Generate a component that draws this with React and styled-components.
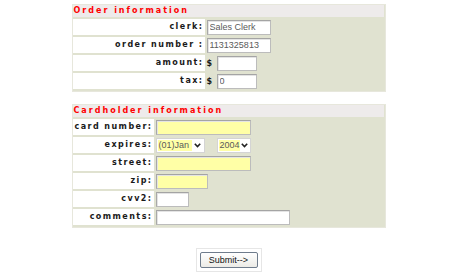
import React from "react";
import styled, { createGlobalStyle } from "styled-components";

const GlobalStyle = createGlobalStyle`
  body {
    margin: 0;
    background: #ffffff;
    font-family: "DejaVu Sans", Verdana, sans-serif;
  }
`;

const Page = styled.div`
  display: flex;
  flex-direction: column;
  align-items: center;
  padding-top: 4px;
`;

const Panel = styled.div`
  width: 314px;
  box-sizing: border-box;
  margin-top: ${(p) => p.$top || 0}px;
  border: 1px solid #e7e7dc;
  background: #e0e2d0;
  padding: 0 1px 2px 0;
  display: grid;
  grid-template-columns: ${(p) => p.$label}px 1fr;
  grid-template-rows: 12px;
  grid-auto-rows: 16px;
  gap: 2px;
`;

const Heading = styled.div`
  grid-column: 1 / -1;
  background: #eeebeb;
  color: #ff0000;
  font-size: 8px;
  font-weight: bold;
  letter-spacing: 2px;
  line-height: 12px;
  padding-left: 1px;
`;

const Label = styled.div`
  background: #ffffff;
  color: #1a1a1a;
  font-size: 8px;
  font-weight: bold;
  letter-spacing: 1.45px;
  line-height: 16px;
  text-align: right;
  padding-right: 1px;
  white-space: nowrap;
`;

const Field = styled.div`
  display: flex;
  align-items: center;
`;

const Dollar = styled.span`
  font-size: 8px;
  font-weight: bold;
  color: #1a1a1a;
  width: 6px;
  margin-right: 4px;
`;

const TextBox = styled.input`
  width: ${(p) => p.$w}px;
  height: 15px;
  box-sizing: border-box;
  padding: 0 2px;
  margin: 0;
  border: 1px solid #bcbcbc;
  border-top-color: #a4a4a4;
  border-left-color: #a8a8a8;
  box-shadow: inset 1px 1px 0 #e4e4e4;
  background: ${(p) => (p.$yellow ? "#ffffa6" : "#ffffff")};
  font-family: "Liberation Sans", Arial, sans-serif;
  font-size: 9px;
  color: #5a5a5a;
  outline: none;
`;

const SelectBox = styled.span`
  display: inline-flex;
  width: ${(p) => p.$w}px;
  height: 15px;
  box-sizing: border-box;
  border: 1px solid #d4d4d4;
  background: #ffffff;
  margin-left: ${(p) => p.$left || 0}px;
`;

const SelectValue = styled.span`
  flex: 1;
  margin: 1px 0 1px 1px;
  background: #ffffa6;
  font-family: "Liberation Sans", Arial, sans-serif;
  font-size: 9px;
  line-height: 11px;
  color: #5a5a5a;
  padding-left: 1px;
`;

const SelectArrow = styled.span`
  width: 12px;
  display: flex;
  align-items: center;
  justify-content: center;
`;

const Footer = styled.div`
  margin-top: 20px;
  padding: 3px;
  border: 1px solid #e6e6e6;
`;

const SubmitButton = styled.button`
  display: block;
  width: 58px;
  height: 16px;
  box-sizing: border-box;
  padding: 0;
  border: 1px solid #6f7c8c;
  border-radius: 2px;
  background: linear-gradient(#ffffff, #ecebe6);
  font-family: "Liberation Sans", Arial, sans-serif;
  font-size: 9px;
  color: #111111;
  line-height: 14px;
`;

function Chevron() {
  return (
    <svg width="7" height="5" viewBox="0 0 7 5">
      <path d="M0.8 0.8 L3.5 3.6 L6.2 0.8" fill="none" stroke="#222" strokeWidth="1.6" />
    </svg>
  );
}

function Select({ value, width, left }) {
  return (
    <SelectBox $w={width} $left={left}>
      <SelectValue>{value}</SelectValue>
      <SelectArrow>
        <Chevron />
      </SelectArrow>
    </SelectBox>
  );
}

export default function App() {
  return (
    <>
      <GlobalStyle />
      <Page>
        <Panel $label={132}>
          <Heading>Order information</Heading>
          <Label>clerk:</Label>
          <Field>
            <TextBox $w={64} defaultValue="Sales Clerk" />
          </Field>
          <Label>order number :</Label>
          <Field>
            <TextBox $w={64} defaultValue="1131325813" />
          </Field>
          <Label>amount:</Label>
          <Field>
            <Dollar>$</Dollar>
            <TextBox $w={40} defaultValue="" />
          </Field>
          <Label>tax:</Label>
          <Field>
            <Dollar>$</Dollar>
            <TextBox $w={40} defaultValue="0" />
          </Field>
        </Panel>

        <Panel $label={81} $top={12}>
          <Heading>Cardholder information</Heading>
          <Label>card number:</Label>
          <Field>
            <TextBox $w={95} $yellow defaultValue="" />
          </Field>
          <Label>expires:</Label>
          <Field>
            <Select value="(01)Jan" width={49} />
            <Select value="2004" width={34} left={12} />
          </Field>
          <Label>street:</Label>
          <Field>
            <TextBox $w={95} $yellow defaultValue="" />
          </Field>
          <Label>zip:</Label>
          <Field>
            <TextBox $w={52} $yellow defaultValue="" />
          </Field>
          <Label>cvv2:</Label>
          <Field>
            <TextBox $w={33} defaultValue="" />
          </Field>
          <Label>comments:</Label>
          <Field>
            <TextBox $w={134} defaultValue="" />
          </Field>
        </Panel>

        <Footer>
          <SubmitButton type="button">Submit--&gt;</SubmitButton>
        </Footer>
      </Page>
    </>
  );
}
